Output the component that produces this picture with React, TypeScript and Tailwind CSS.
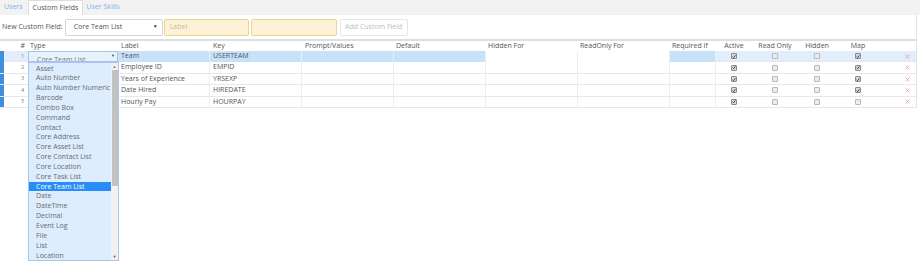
import React from "react";

const types = [
  "Asset",
  "Auto Number",
  "Auto Number Numeric",
  "Barcode",
  "Combo Box",
  "Command",
  "Contact",
  "Core Address",
  "Core Asset List",
  "Core Contact List",
  "Core Location",
  "Core Task List",
  "Core Team List",
  "Date",
  "DateTime",
  "Decimal",
  "Event Log",
  "File",
  "List",
  "Location",
];

const rows = [
  { n: 1, label: "Team", key: "USERTEAM", map: true },
  { n: 2, label: "Employee ID", key: "EMPID", map: true },
  { n: 3, label: "Years of Experience", key: "YRSEXP", map: true },
  { n: 4, label: "Date Hired", key: "HIREDATE", map: true },
  { n: 5, label: "Hourly Pay", key: "HOURPAY", map: false },
];

const cols =
  "grid grid-cols-[28px_90px_92px_92px_92px_92px_92px_92px_46px_36px_46px_38px_44px_36px]";

function Box({ checked }: { checked: boolean }) {
  return (
    <span
      className={
        "inline-flex h-[6px] w-[6px] items-center justify-center rounded-[1px] border " +
        (checked ? "border-[#8a8a8a] bg-[#d8d8d8]" : "border-[#b8b8b8] bg-[#ececec]")
      }
    >
      {checked && (
        <svg width="5" height="5" viewBox="0 0 10 10">
          <path d="M1.5 5.5 L4 8 L8.5 2" fill="none" stroke="#222" strokeWidth="2" />
        </svg>
      )}
    </span>
  );
}

function DeleteX() {
  return (
    <svg width="5" height="5" viewBox="0 0 10 10">
      <path d="M1 1 L9 9 M9 1 L1 9" stroke="#ef8a8a" strokeWidth="1.4" />
    </svg>
  );
}

export default function App() {
  return (
    <div className="relative h-[274px] w-[920px] overflow-hidden bg-white text-[7px] text-[#555] [font-family:'Open_Sans',sans-serif]">
      {/* tabs */}
      <div className="flex h-[15px] items-end bg-[#f2f2f2] pl-[1px]">
        <div className="flex h-[15px] items-center px-[3px] text-[#7fb2ea]">Users</div>
        <div className="ml-[2px] flex h-[15px] items-center border-x border-t border-[#dddddd] bg-white px-[4px] text-[#555]">
          Custom Fields
        </div>
        <div className="flex h-[15px] items-center px-[3px] text-[#7fb2ea]">User Skills</div>
      </div>

      {/* toolbar */}
      <div className="flex h-[24px] w-[917px] items-center border-r border-[#e2e2e2] pl-[2px]">
        <span className="mr-[2px]">New Custom Field:</span>
        <div className="flex h-[17px] w-[98px] items-center justify-between rounded-[2px] border border-[#d6d6d6] bg-white pl-[8px] pr-[4px]">
          <span>Core Team List</span>
          <span className="text-[5px] text-[#444]">▼</span>
        </div>
        <div className="ml-[1px] flex h-[17px] w-[85px] items-center rounded-[2px] border border-[#ecd590] bg-[#fcf3d6] pl-[5px] text-[#c9bb90]">
          Label
        </div>
        <div className="ml-[2px] h-[17px] w-[86px] rounded-[2px] border border-[#ecd590] bg-[#fcf3d6]" />
        <div className="ml-[3px] flex h-[17px] w-[68px] items-center justify-center rounded-[2px] border border-[#e6e6e6] bg-white text-[#bdbdbd]">
          Add Custom Field
        </div>
      </div>

      {/* header */}
      <div className={cols + " h-[12px] w-[917px] items-center border-t-2 border-r border-[#dedede] border-r-[#e2e2e2]"}>
        <div className="pr-[3px] text-right">#</div>
        <div className="pl-[2px]">Type</div>
        <div className="pl-[3px]">Label</div>
        <div className="pl-[3px]">Key</div>
        <div className="pl-[3px]">Prompt/Values</div>
        <div className="pl-[2px]">Default</div>
        <div className="pl-[2px]">Hidden For</div>
        <div className="pl-[2px]">ReadOnly For</div>
        <div className="pl-[2px]">Required If</div>
        <div className="text-center">Active</div>
        <div className="text-center">Read Only</div>
        <div className="text-center">Hidden</div>
        <div className="text-center">Map</div>
        <div />
      </div>

      {/* rows */}
      {rows.map((r) => {
        const sel = r.n === 1;
        const cell = "h-full border-r border-[#eeeeee] flex items-center";
        const blue = sel ? " bg-[#c7e1fb]" : "";
        return (
          <div
            key={r.n}
            className={
              cols +
              " h-[11.4px] w-[917px] border-b border-r border-[#e8e8e8] border-r-[#e2e2e2]" +
              (sel ? " bg-[#e1eefc]" : "")
            }
          >
            <div className="flex h-full items-center">
              <span className="h-full w-[4px] bg-[#3f8fde]" />
              <span className="flex-1 pr-[4px] text-right text-[5px] text-[#777]">{r.n}</span>
            </div>
            <div className="h-full">
              {sel && (
                <div className="flex h-full items-end justify-between overflow-hidden border border-[#a6c4ea] bg-[#e8f2fd] pl-[8px] pr-[2px]">
                  <span className="-mb-[5px] text-[#777]">Core Team List</span>
                  <span className="self-center text-[4px] text-[#444]">▼</span>
                </div>
              )}
            </div>
            <div className={cell + blue + " pl-[3px]"}>{r.label}</div>
            <div className={cell + blue + " pl-[3px]"}>{r.key}</div>
            <div className={cell + blue} />
            <div className={cell + blue} />
            <div className={cell + (sel ? " bg-white" : "")} />
            <div className={cell + (sel ? " bg-white" : "")} />
            <div className={cell + blue} />
            <div className="flex h-full items-center justify-center">
              <Box checked />
            </div>
            <div className="flex h-full items-center justify-center">
              <Box checked={false} />
            </div>
            <div className="flex h-full items-center justify-center">
              <Box checked={false} />
            </div>
            <div className="flex h-full items-center justify-center">
              <Box checked={r.map} />
            </div>
            <div className="flex h-full items-center justify-end pr-[6px]">
              <DeleteX />
            </div>
          </div>
        );
      })}

      {/* open type dropdown */}
      <div className="absolute left-[28px] top-[62px] z-10 flex h-[199px] w-[91px] border border-[#a9c7ee] bg-[#ddedfd]">
        <div className="flex-1 pt-[0.5px]">
          {types.map((t) => (
            <div
              key={t}
              className={
                "h-[9.85px] pl-[7px] leading-[9.85px] " +
                (t === "Core Team List" ? "bg-[#2a8cf7] text-white" : "text-[#6b6b6b]")
              }
            >
              {t}
            </div>
          ))}
        </div>
        <div className="flex w-[7px] flex-col bg-[#f1f1f1]">
          <div className="flex h-[7px] items-center justify-center text-[4px] text-[#777]">▲</div>
          <div className="mx-[0.5px] h-[116px] bg-[#c2c2c2]" />
          <div className="flex-1" />
          <div className="flex h-[7px] items-center justify-center text-[4px] text-[#555]">▼</div>
        </div>
      </div>
    </div>
  );
}
